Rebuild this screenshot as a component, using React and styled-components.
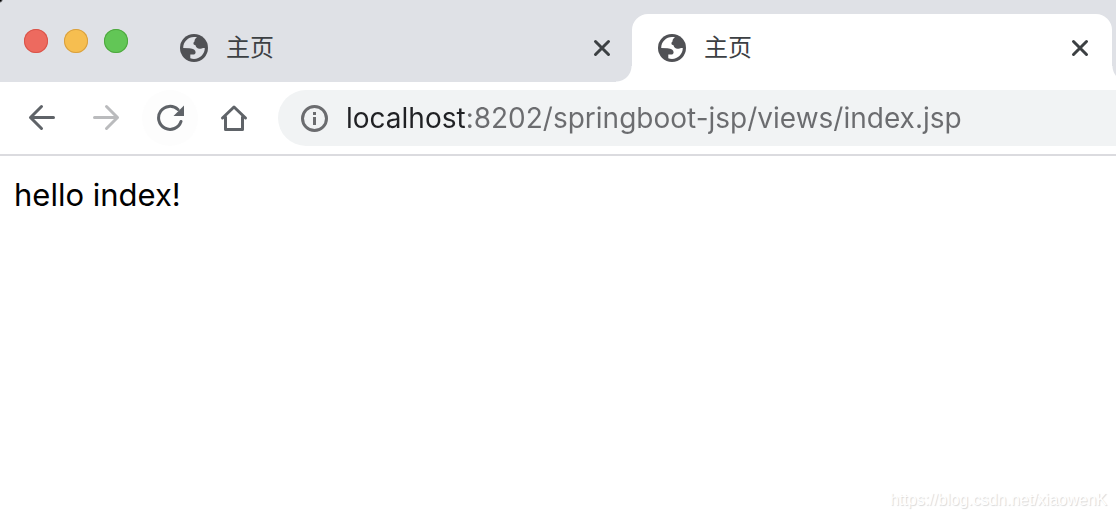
import React from 'react'
import styled, { createGlobalStyle } from 'styled-components'

const tabs = [
    { id: 'first', title: '主页', active: false },
    { id: 'second', title: '主页', active: true },
];

const lights = [
    { name: 'Close window', fill: '#ed6a5f', edge: '#d9544a' },
    { name: 'Minimize window', fill: '#f6be50', edge: '#d8a040' },
    { name: 'Zoom window', fill: '#62c656', edge: '#4ea73f' },
];

const Globe = () => (
    <svg width="28" height="28" viewBox="0 0 28 28" aria-hidden="true">
        <circle cx="14" cy="14" r="14" fill="#505155" />
        <path
            fill="currentColor"
            d="M3.200 14C3.200 7.800 8.200 3.100 14 3.100C15.200 3.100 16.200 3.200 17 3.500C15 4.500 14.500 5.500 14.500 7.500C13.700 8 13.300 8.800 13.500 9.800C13.700 10.800 14.500 11.200 15.500 11.200C16 13.300 17.500 14.800 19.500 14.800C21 14.800 22 14 24.800 14C24.800 20 20 24.900 14 24.900C12.600 24.900 11.400 24.700 10.300 24.300V20.600H13C14.600 20.600 15.600 19.700 15.600 18.300C15.600 16 13.500 14.500 9.500 14.300Z"
        />
    </svg>
)

const Cross = () => (
    <svg width="18" height="18" viewBox="0 0 18 18" aria-hidden="true">
        <path d="M2.500 2.500L15.500 15.500M15.500 2.500L2.500 15.500" stroke="#3c4043" strokeWidth="3" strokeLinecap="round" />
    </svg>
)

const Back = () => (
    <NavIcon viewBox="0 0 28 28" aria-hidden="true">
        <path d="M13.500 2.500L2.500 13.500L13.500 24.500M2.500 13.500H25.500" />
    </NavIcon>
)

const Forward = () => (
    <NavIcon viewBox="0 0 28 28" aria-hidden="true">
        <path d="M14.500 2.500L25.500 13.500L14.500 24.500M25.500 13.500H2.500" />
    </NavIcon>
)

const Reload = () => (
    <NavIcon viewBox="0 0 28 28" aria-hidden="true">
        <path d="M25 17.500A11.500 11.500 0 1 1 22 5.500" />
        <path d="M28 1.500V12H17.500Z" fill="currentColor" stroke="none" />
    </NavIcon>
)

const Home = () => (
    <NavIcon viewBox="0 0 28 28" aria-hidden="true">
        <path d="M2.500 14L14 3L25.500 14M5.500 13V25.500H22.500V13" />
    </NavIcon>
)

const Info = () => (
    <svg width="28" height="28" viewBox="0 0 28 28" aria-hidden="true">
        <circle cx="14.500" cy="14.500" r="12" fill="none" stroke="#6b6c6f" strokeWidth="3" />
        <path d="M13 8H16V11H13ZM13 13H16V21H13Z" fill="#6b6c6f" />
    </svg>
)

export default function App() {
    return (
        <Container>
            <GlobalStyle />
            <TabStrip>
                <WindowControls>
                    {lights.map((light) => (
                        <Light key={light.name} aria-label={light.name} $fill={light.fill} $edge={light.edge} />
                    ))}
                </WindowControls>
                {tabs.map((tab) => (
                    <Tab key={tab.id} $active={tab.active}>
                        <TabLink href="#">
                            <Globe />
                            <span>{tab.title}</span>
                        </TabLink>
                        <CloseButton aria-label="Close tab">
                            <Cross />
                        </CloseButton>
                    </Tab>
                ))}
            </TabStrip>
            <Toolbar>
                <NavButton aria-label="Back"><Back /></NavButton>
                <NavButton aria-label="Forward" disabled><Forward /></NavButton>
                <NavButton aria-label="Reload" $hovered><Reload /></NavButton>
                <NavButton aria-label="Home"><Home /></NavButton>
                <AddressBar>
                    <Info />
                    <Address aria-label="Address" defaultValue="localhost:8202/springboot-jsp/views/index.jsp" />
                </AddressBar>
            </Toolbar>
            <Page>
                <Greeting>hello index!</Greeting>
                <Watermark>https://blog.csdn.net/xiaowenK</Watermark>
            </Page>
        </Container>
    )
}

const GlobalStyle = createGlobalStyle`
    * {
        box-sizing: border-box;
    }
    body {
        margin: 0;
        background: #ffffff;
    }
    button {
        padding: 0;
        border: none;
        background: none;
    }
    svg {
        display: block;
        flex-shrink: 0;
    }
`

const Container = styled.div`
    display: flex;
    flex-direction: column;
    min-height: 100vh;
    overflow: hidden;
    font-family: Inter, "Noto Sans CJK SC", sans-serif;
`

const TabStrip = styled.header`
    display: flex;
    align-items: flex-end;
    height: 82px;
    overflow: hidden;
    background: radial-gradient(circle at 0 0, #000000 1px, #dfe1e6 3px);
`

const WindowControls = styled.div`
    display: flex;
    flex-shrink: 0;
    align-items: center;
    align-self: center;
    gap: 16px;
    width: 156px;
    padding-left: 24px;
`

const Light = styled.button`
    width: 24px;
    height: 24px;
    border-radius: 50%;
    background: ${({ $fill }) => $fill};
    box-shadow: inset 0 0 0 1px ${({ $edge }) => $edge};
`

const Tab = styled.div`
    position: relative;
    display: flex;
    flex: 0 1 480px;
    align-items: center;
    justify-content: space-between;
    height: 68px;
    margin-left: -2px;
    padding: 0 22px 0 26px;
    border-radius: 16px 16px 0 0;
    background: ${({ $active }) => ($active ? '#ffffff' : 'transparent')};
    color: ${({ $active }) => ($active ? '#ffffff' : '#dfe1e6')};
    /* feet that flare out of the active tab */
    &::before,
    &::after {
        content: "";
        display: ${({ $active }) => ($active ? 'block' : 'none')};
        position: absolute;
        bottom: 0;
        width: 16px;
        height: 16px;
    }
    &::before {
        right: 100%;
        background: radial-gradient(circle at 0 0, transparent 15px, #ffffff 16px);
    }
    &::after {
        left: 100%;
        background: radial-gradient(circle at 100% 0, transparent 15px, #ffffff 16px);
    }
`

const TabLink = styled.a`
    display: flex;
    align-items: center;
    gap: 18px;
    color: inherit;
    text-decoration: none;
    span {
        padding-bottom: 4px;
        color: #3c4043;
        font-family: "Noto Sans CJK SC", sans-serif;
        font-size: 24px;
        line-height: 32px;
    }
`

const CloseButton = styled.button`
    padding: 1px;
`

const Toolbar = styled.nav`
    display: flex;
    align-items: center;
    gap: 8px;
    height: 74px;
    padding-left: 14px;
    border-bottom: 2px solid #dbdbdf;
    background: #ffffff;
`

const NavButton = styled.button`
    display: flex;
    flex-shrink: 0;
    align-items: center;
    justify-content: center;
    width: 56px;
    height: 56px;
    border-radius: 50%;
    background: ${({ $hovered }) => ($hovered ? '#fdfdfd' : 'transparent')};
    color: #5f6368;
    &:disabled {
        color: #babbbd;
    }
`

const NavIcon = styled.svg`
    width: 28px;
    height: 28px;
    fill: none;
    stroke: currentColor;
    stroke-width: 3;
    stroke-linecap: round;
    stroke-linejoin: round;
`

const AddressBar = styled.label`
    display: flex;
    flex: 1;
    align-items: center;
    gap: 18px;
    height: 56px;
    margin-left: 8px;
    padding-left: 22px;
    border-radius: 28px 0 0 28px;
    background: #f1f3f4;
`

/* the host is drawn darker than the rest of the address */
const Address = styled.input`
    flex: 1;
    min-width: 0;
    padding: 0;
    border: none;
    outline: none;
    background: linear-gradient(90deg, #202124 120px, #6b6c6f 120px);
    background-clip: text;
    -webkit-text-fill-color: transparent;
    color: #6b6c6f;
    font-family: inherit;
    font-size: 28px;
    line-height: 40px;
`

const Page = styled.main`
    display: flex;
    flex: 1;
    flex-direction: column;
    justify-content: space-between;
    padding: 19px 9px 8px 14px;
`

const Greeting = styled.p`
    margin: 0;
    color: #000000;
    font-size: 31px;
    line-height: 40px;
`

const Watermark = styled.span`
    align-self: flex-end;
    color: #ffffff;
    font-family: "Liberation Sans", sans-serif;
    font-size: 16px;
    line-height: 20px;
    text-shadow: 1px 1px 1px #d8d8d8;
`
